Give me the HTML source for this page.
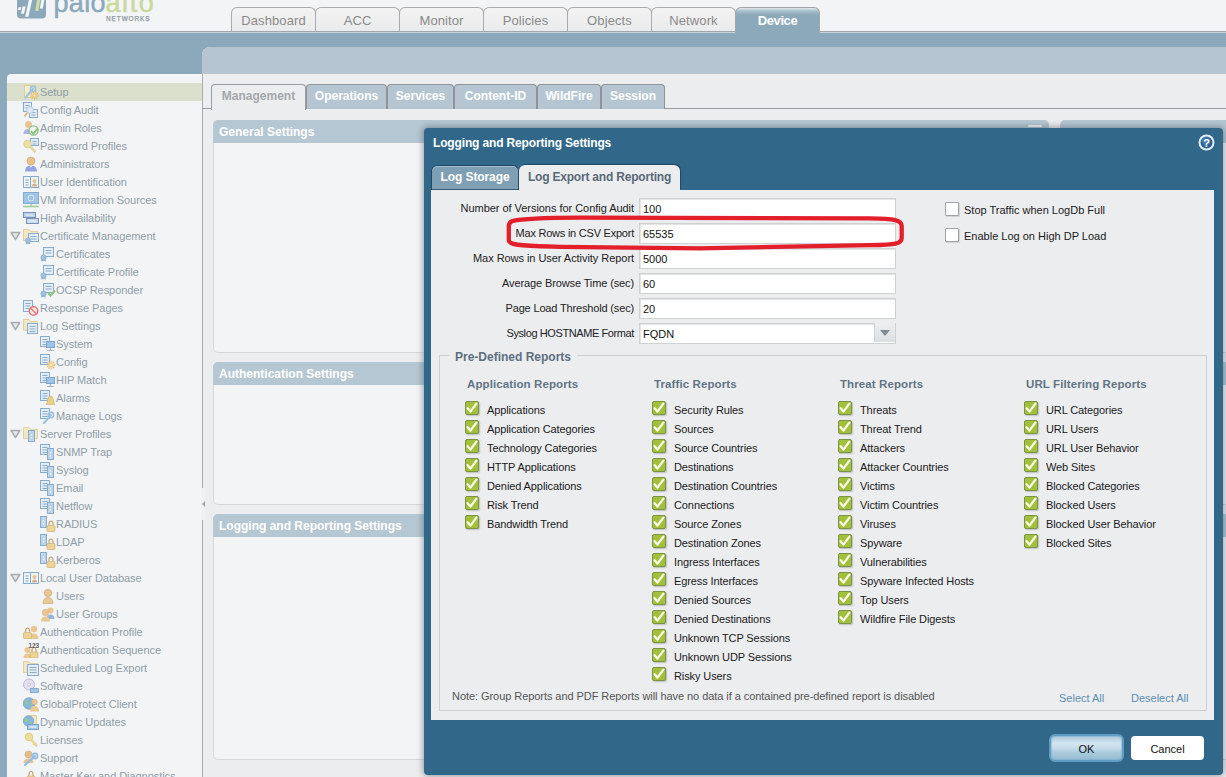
<!DOCTYPE html>
<html><head><meta charset="utf-8"><style>
*{box-sizing:border-box;margin:0;padding:0}
html,body{width:1226px;height:777px;overflow:hidden;background:#f3f4f6;font-family:"Liberation Sans",sans-serif;position:relative}
.a{position:absolute}
.tt{position:absolute;top:7px;height:25px;width:85px;border:1px solid #a9abad;border-bottom:none;border-radius:6px 6px 0 0;background:linear-gradient(#f3f3f3,#e9eaeb);color:#8a8a8a;font-size:13px;text-align:center;line-height:26px;letter-spacing:0.1px}
.band{left:0;top:31px;width:1226px;height:746px;background:#8ca9bc;border-top:1px solid #a2a6aa}
.band:after{content:"";position:absolute;left:0;top:0;width:100%;height:1px;background:#c3d3de}
.side{left:7px;top:74px;width:196px;height:710px;background:#f3f4f6;border-radius:4px 0 0 0;border-right:1px solid #b3bcc4;overflow:hidden}
.si{position:absolute;left:0;height:18px;width:195px;font-size:11px;color:#8f9ea8;line-height:18px;white-space:nowrap;letter-spacing:-0.06px}
.si svg{position:absolute;top:1px;width:16px;height:16px;opacity:.72}
.si span{position:absolute;top:0}
.si svg.tri{position:absolute;top:4px;left:3px;width:11px;height:10px;opacity:1}
.main{left:202px;top:47px;width:1030px;height:740px;background:#ecedef;border-radius:8px 0 0 0;overflow:hidden}
.mtop{left:0;top:0;width:100%;height:27px;background:#b5c6d2}
.st{position:absolute;top:37px;height:25px;border:1px solid #8e9499;border-bottom:none;border-radius:4px 4px 0 0;background:#b5c6d2;color:#fff;font-size:12px;font-weight:bold;text-align:center;line-height:22px}
.pnl{position:absolute;background:#f3f4f6;border:1px solid #d6d9dc;border-radius:5px}
.ph{position:absolute;left:-1px;top:-1px;right:-1px;height:23px;background:#b5c7d3;border-radius:5px 5px 0 0;color:#fff;font-size:12px;font-weight:bold;line-height:25px;padding-left:6px}
</style></head><body>
<svg class="a" style="left:0;top:0" width="170" height="24" viewBox="0 0 170 24">
<path d="M17,-6 H46 V14.5 Q46,18.5 42,18.5 H21 Q17,18.5 17,14.5 Z" fill="#8ca9bc"/>
<path d="M18.6,7.2 L21.4,7.2 L20.6,10 L17.8,10 Z" fill="#f4f6f8"/>
<path d="M22.6,6.4 L25.6,6.4 L24,13.8 L21,13.8 Z" fill="#f4f6f8"/>
<path d="M29.4,-2 L32.6,-2 L28.4,16.8 L25.2,16.8 Z" fill="#f4f6f8"/>
<path d="M37.4,-2 L40.6,-2 L38.2,11 L35.2,11 Z" fill="#cfe0a0"/>
<path d="M41.6,-2 L44.6,-2 L42.8,8.4 L39.8,8.4 Z" fill="#f4f6f8"/>
<text x="53.5" y="12.4" font-family="Liberation Sans" font-size="27" fill="#8ca9bc" stroke="#8ca9bc" stroke-width="0.5" letter-spacing="0.3">palo</text>
<text x="105.5" y="12.4" font-family="Liberation Sans" font-size="27" fill="#c9d89c" stroke="#c9d89c" stroke-width="0.5" letter-spacing="1.6">alto</text>
<text x="106" y="20.8" font-family="Liberation Sans" font-size="6.4" fill="#8f9aa3" stroke="#8f9aa3" stroke-width="0.25" letter-spacing="0.95">NETWORKS</text>
</svg>
<div class="tt" style="left:231px">Dashboard</div>
<div class="tt" style="left:315px">ACC</div>
<div class="tt" style="left:399px">Monitor</div>
<div class="tt" style="left:483px">Policies</div>
<div class="tt" style="left:567px">Objects</div>
<div class="tt" style="left:651px">Network</div>
<div class="a band"></div>
<div class="tt" style="left:735px;width:85px;height:27px;background:linear-gradient(#e3e9ee 0,#a9bfcd 3px,#8ca9bc 7px);color:#fff;font-weight:bold;border-color:#a2a6aa;letter-spacing:-0.4px">Device</div>
<svg width="0" height="0" style="position:absolute"><defs><symbol id="i-setup" viewBox="0 0 16 16"><rect x="1.5" y="1.5" width="11" height="12" fill="#fbf4dc" stroke="#e2c77e"/><path d="M2.5,13.5 L10,5" stroke="#8ab8e0" stroke-width="2.2" stroke-linecap="round"/><circle cx="10" cy="5" r="2.6" fill="none" stroke="#8ab8e0" stroke-width="1.6"/><circle cx="11.5" cy="11.5" r="3.4" fill="none" stroke="#e0a64f" stroke-width="1.6" stroke-dasharray="1.3 1"/><circle cx="11.5" cy="11.5" r="2.5999999999999996" fill="#f2c35a"/><circle cx="11.5" cy="11.5" r="1" fill="#fff8e0"/></symbol><symbol id="i-audit" viewBox="0 0 16 16"><rect x="0.5" y="0.5" width="8" height="9" fill="#dfeaf4" stroke="#5f93bd"/><path d="M2.5,3.5 H6.5" stroke="#5f93bd" stroke-width="1"/><path d="M2.5,6.0 H6.5" stroke="#5f93bd" stroke-width="1"/><rect x="6.5" y="7.5" width="8" height="8" fill="#dfeaf4" stroke="#5f93bd"/><path d="M8.5,10.5 H12.5" stroke="#5f93bd" stroke-width="1"/><path d="M8.5,13.0 H12.5" stroke="#5f93bd" stroke-width="1"/><circle cx="7" cy="8" r="3.4" fill="#d6e6f3" stroke="#9bb7cc" stroke-width=".8"/><path d="M4.5,10.5 L1.5,14.5" stroke="#d9a060" stroke-width="1.8"/></symbol><symbol id="i-roles" viewBox="0 0 16 16"><circle cx="5.5" cy="4.5" r="3.5" fill="#e3b36e"/><path d="M0.5,14 Q0.5,9 5,9 Q9,9 9,14Z" fill="#8f9ae0"/><circle cx="10.5" cy="10.5" r="4.6" fill="#eef6ec" stroke="#69ad59" stroke-width="1.4"/><path d="M7.8,11.1 L10.3,13.6 L14.8,8.6" fill="none" stroke="#5fae4e" stroke-width="2"/></symbol><symbol id="i-pwd" viewBox="0 0 16 16"><rect x="7.5" y="0.5" width="8" height="7" fill="#dfeaf4" stroke="#5f93bd"/><path d="M9.5,3.5 H13.5" stroke="#5f93bd" stroke-width="1"/><path d="M9.5,6.0 H13.5" stroke="#5f93bd" stroke-width="1"/><circle cx="4.5" cy="6" r="3.8" fill="#ead98a" stroke="#cdb560" stroke-width=".7"/><path d="M6.5,8 L12.5,14" stroke="#e0cd78" stroke-width="2.6"/></symbol><symbol id="i-admin" viewBox="0 0 16 16"><circle cx="8" cy="5" r="4" fill="#e6ae63" stroke="#c08a40" stroke-width=".6"/><path d="M2,15.5 Q2,9.5 8,9.5 Q14,9.5 14,15.5Z" fill="#6f86d8"/><path d="M6.5,9.8 L8,11.5 L9.5,9.8" fill="#fff"/></symbol><symbol id="i-uid" viewBox="0 0 16 16"><rect x="0.5" y="2.5" width="15" height="11" fill="#eef3f8" stroke="#5f93bd"/><path d="M7.5,2.5 V13.5 M2.5,6 H5.5 M2.5,8.5 H5.5 M2.5,11 H5.5" stroke="#5f93bd"/><circle cx="11.5" cy="7" r="2" fill="#e3b06a"/><path d="M9,12.5 Q9,9.5 11.5,9.5 Q14,9.5 14,12.5Z" fill="#c99a5a"/></symbol><symbol id="i-vm" viewBox="0 0 16 16"><rect x="0.5" y="0.5" width="15" height="11" fill="#7fb2de" stroke="#5a90c2"/><circle cx="8" cy="6" r="3" fill="none" stroke="#cfe3f4" stroke-width="1"/><path d="M0,14.5 H16" stroke="#7cc36c" stroke-width="1.6"/><path d="M8,12 V14" stroke="#8899aa"/></symbol><symbol id="i-ha" viewBox="0 0 16 16"><rect x="0.5" y="2.5" width="12" height="5" fill="#a6c2e4" stroke="#4f6f9f"/><rect x="3.5" y="8.5" width="12" height="5" fill="#bcd3ee" stroke="#4f6f9f"/><path d="M3,5 H10 M6,11 H13" stroke="#e8f0f8"/></symbol><symbol id="i-fcert" viewBox="0 0 16 16"><path d="M.5,1.5 V12.5 H14.5 V3.5 H7.5 L6,1.5 Z" fill="#efe3b4" stroke="#ddc37a"/><rect x="5.5" y="5.5" width="10" height="8" fill="#dfeaf4" stroke="#5f93bd"/><path d="M7.5,8.5 H13.5" stroke="#5f93bd" stroke-width="1"/><path d="M7.5,11.0 H13.5" stroke="#5f93bd" stroke-width="1"/><path d="M3.2,13.5 L2.6,16.7 L5,15.5 L7.4,16.7 L6.8,13.5" fill="#5f93bd"/><circle cx="5" cy="12.5" r="2.6" fill="#7fb0d6" stroke="#5f93bd" stroke-width=".8"/></symbol><symbol id="i-cert" viewBox="0 0 16 16"><rect x="3.5" y="1.5" width="10" height="9" fill="#dfeaf4" stroke="#5f93bd"/><path d="M5.5,4.5 H11.5" stroke="#5f93bd" stroke-width="1"/><path d="M5.5,7.0 H11.5" stroke="#5f93bd" stroke-width="1"/><path d="M1.7,12.5 L1.1,15.7 L3.5,14.5 L5.9,15.7 L5.3,12.5" fill="#5f93bd"/><circle cx="3.5" cy="11.5" r="2.6" fill="#7fb0d6" stroke="#5f93bd" stroke-width=".8"/></symbol><symbol id="i-ocsp" viewBox="0 0 16 16"><rect x="3.5" y="1.5" width="10" height="9" fill="#dfeaf4" stroke="#5f93bd"/><path d="M5.5,4.5 H11.5" stroke="#5f93bd" stroke-width="1"/><path d="M5.5,7.0 H11.5" stroke="#5f93bd" stroke-width="1"/><path d="M1.7,12.5 L1.1,15.7 L3.5,14.5 L5.9,15.7 L5.3,12.5" fill="#5f93bd"/><circle cx="3.5" cy="11.5" r="2.6" fill="#7fb0d6" stroke="#5f93bd" stroke-width=".8"/><path d="M8,11.0 L10.5,13.5 L15,8.5" fill="none" stroke="#5fb04f" stroke-width="2"/></symbol><symbol id="i-resp" viewBox="0 0 16 16"><rect x="0.5" y="0.5" width="9" height="11" fill="#dfeaf4" stroke="#5f93bd"/><path d="M2.5,3.5 H7.5" stroke="#5f93bd" stroke-width="1"/><path d="M2.5,6.0 H7.5" stroke="#5f93bd" stroke-width="1"/><path d="M2.5,8.5 H7.5" stroke="#5f93bd" stroke-width="1"/><circle cx="10.5" cy="11" r="4.2" fill="#fbe9e9" stroke="#e04a4a" stroke-width="1.6"/><path d="M7.7,8.2 L13.3,13.8" stroke="#e04a4a" stroke-width="1.6"/></symbol><symbol id="i-flog" viewBox="0 0 16 16"><path d="M.5,1.5 V12.5 H14.5 V3.5 H7.5 L6,1.5 Z" fill="#efe3b4" stroke="#ddc37a"/><rect x="4.5" y="5.5" width="10" height="10" fill="#dfeaf4" stroke="#5f93bd"/><path d="M6.5,8.5 H12.5" stroke="#5f93bd" stroke-width="1"/><path d="M6.5,11.0 H12.5" stroke="#5f93bd" stroke-width="1"/><path d="M6.5,13.5 H12.5" stroke="#5f93bd" stroke-width="1"/></symbol><symbol id="i-lsys" viewBox="0 0 16 16"><rect x="0.5" y="0.5" width="9" height="10" fill="#dfeaf4" stroke="#5f93bd"/><path d="M2.5,3.5 H7.5" stroke="#5f93bd" stroke-width="1"/><path d="M2.5,6.0 H7.5" stroke="#5f93bd" stroke-width="1"/><path d="M2.5,8.5 H7.5" stroke="#5f93bd" stroke-width="1"/><rect x="6.5" y="5.5" width="8" height="6" fill="#7eb4e2" stroke="#4f86bf"/><path d="M10.5,12 v2 M7,14.5 h7" stroke="#8a9aa8" stroke-width="1.2"/></symbol><symbol id="i-lcfg" viewBox="0 0 16 16"><rect x="0.5" y="0.5" width="9" height="10" fill="#dfeaf4" stroke="#5f93bd"/><path d="M2.5,3.5 H7.5" stroke="#5f93bd" stroke-width="1"/><path d="M2.5,6.0 H7.5" stroke="#5f93bd" stroke-width="1"/><path d="M2.5,8.5 H7.5" stroke="#5f93bd" stroke-width="1"/><circle cx="11" cy="11" r="3.6" fill="none" stroke="#e0a64f" stroke-width="1.6" stroke-dasharray="1.3 1"/><circle cx="11" cy="11" r="2.8" fill="#f2c35a"/><circle cx="11" cy="11" r="1" fill="#fff8e0"/></symbol><symbol id="i-lhip" viewBox="0 0 16 16"><rect x="0.5" y="0.5" width="9" height="10" fill="#dfeaf4" stroke="#5f93bd"/><path d="M2.5,3.5 H7.5" stroke="#5f93bd" stroke-width="1"/><path d="M2.5,6.0 H7.5" stroke="#5f93bd" stroke-width="1"/><path d="M2.5,8.5 H7.5" stroke="#5f93bd" stroke-width="1"/><rect x="6.5" y="5.5" width="8" height="6" fill="#7eb4e2" stroke="#4f86bf"/><path d="M10.5,12 v2 M7,14.5 h7" stroke="#8a9aa8" stroke-width="1.2"/></symbol><symbol id="i-lalarm" viewBox="0 0 16 16"><rect x="0.5" y="0.5" width="9" height="10" fill="#dfeaf4" stroke="#5f93bd"/><path d="M2.5,3.5 H7.5" stroke="#5f93bd" stroke-width="1"/><path d="M2.5,6.0 H7.5" stroke="#5f93bd" stroke-width="1"/><path d="M2.5,8.5 H7.5" stroke="#5f93bd" stroke-width="1"/><path d="M6,14.5 Q7.5,13 7.8,9 Q8.2,6 10.5,6 Q12.8,6 13.2,9 Q13.5,13 15,14.5Z" fill="#e7c25a" stroke="#c49a38" stroke-width=".6"/></symbol><symbol id="i-lmanage" viewBox="0 0 16 16"><rect x="0.5" y="0.5" width="9" height="10" fill="#dfeaf4" stroke="#5f93bd"/><path d="M2.5,3.5 H7.5" stroke="#5f93bd" stroke-width="1"/><path d="M2.5,6.0 H7.5" stroke="#5f93bd" stroke-width="1"/><path d="M2.5,8.5 H7.5" stroke="#5f93bd" stroke-width="1"/><path d="M4,15 L11,7" stroke="#7fb0da" stroke-width="2.2" stroke-linecap="round"/><circle cx="11" cy="7" r="2.6" fill="none" stroke="#7fb0da" stroke-width="1.6"/></symbol><symbol id="i-fsrv" viewBox="0 0 16 16"><path d="M.5,1.5 V12.5 H14.5 V3.5 H7.5 L6,1.5 Z" fill="#efe3b4" stroke="#ddc37a"/><rect x="5.5" y="4.5" width="6" height="11" fill="#a9c9e6" stroke="#5f93bd"/><path d="M8.5,8 v1.5 M8.5,11 v1.5" stroke="#fff" stroke-width="1.2"/></symbol><symbol id="i-srv" viewBox="0 0 16 16"><rect x="0.5" y="0.5" width="9" height="10" fill="#dfeaf4" stroke="#5f93bd"/><path d="M2.5,3.5 H7.5" stroke="#5f93bd" stroke-width="1"/><path d="M2.5,6.0 H7.5" stroke="#5f93bd" stroke-width="1"/><path d="M2.5,8.5 H7.5" stroke="#5f93bd" stroke-width="1"/><rect x="7.5" y="4.5" width="6" height="11" fill="#a9c9e6" stroke="#5f93bd"/><path d="M10.5,8 v1.5 M10.5,11 v1.5" stroke="#fff" stroke-width="1.2"/></symbol><symbol id="i-slock" viewBox="0 0 16 16"><rect x="0.5" y="0.5" width="6" height="11" fill="#a9c9e6" stroke="#5f93bd"/><path d="M3.5,4 v1.5 M3.5,7 v1.5" stroke="#fff" stroke-width="1.2"/><path d="M9,9.5 V8.0 Q9,5.0 11,5.0 Q13,5.0 13,8.0 V9.5" fill="none" stroke="#b08a40" stroke-width="1.2"/><rect x="7" y="9.5" width="8" height="6" rx="1" fill="#ecc870" stroke="#c09a48" stroke-width=".7"/></symbol><symbol id="i-user" viewBox="0 0 16 16"><circle cx="8" cy="5" r="3.8" fill="#e9b46c" stroke="#b98a48" stroke-width=".6"/><path d="M3,15.5 Q3,9.5 8,9.5 Q13,9.5 13,15.5Z" fill="#eab86e" stroke="#b98a48" stroke-width=".6"/></symbol><symbol id="i-ugrp" viewBox="0 0 16 16"><circle cx="10.5" cy="4.5" r="3" fill="#e9b46c"/><path d="M6.5,13 Q6.5,8.5 10.5,8.5 Q14.5,8.5 14.5,13Z" fill="#6e9fd8"/><circle cx="5.5" cy="6.5" r="3.2" fill="#e9b46c" stroke="#b98a48" stroke-width=".5"/><path d="M1,15.5 Q1,10.5 5.5,10.5 Q10,10.5 10,15.5Z" fill="#eab86e"/></symbol><symbol id="i-authp" viewBox="0 0 16 16"><circle cx="11" cy="5" r="3.2" fill="#e9b46c"/><path d="M6.5,15 Q6.5,9.5 11,9.5 Q15.5,9.5 15.5,15Z" fill="#eab86e"/><path d="M2.5,8.5 V7.0 Q2.5,4.0 4.5,4.0 Q6.5,4.0 6.5,7.0 V8.5" fill="none" stroke="#b08a40" stroke-width="1.2"/><rect x="0.5" y="8.5" width="8" height="6" rx="1" fill="#ecc870" stroke="#c09a48" stroke-width=".7"/></symbol><symbol id="i-auths" viewBox="0 0 16 16"><circle cx="4.5" cy="8" r="3" fill="#e9b46c"/><path d="M0.5,16 Q0.5,11.5 4.5,11.5 Q8.5,11.5 8.5,16Z" fill="#eab86e"/><path d="M9,10 V8.5 Q9,5.5 11,5.5 Q13,5.5 13,8.5 V10" fill="none" stroke="#b08a40" stroke-width="1.2"/><rect x="7" y="10" width="8" height="6" rx="1" fill="#ecc870" stroke="#c09a48" stroke-width=".7"/><text x="5.5" y="5.5" font-family="Liberation Sans" font-size="6.5" font-weight="bold" fill="#222">123</text></symbol><symbol id="i-sched" viewBox="0 0 16 16"><path d="M.5,1.5 V12.5 H14.5 V3.5 H7.5 L6,1.5 Z" fill="#efe3b4" stroke="#ddc37a"/><rect x="4.5" y="4.5" width="11" height="11" fill="#dfeaf4" stroke="#5f93bd"/><path d="M6.5,7.5 H13.5" stroke="#5f93bd" stroke-width="1"/><path d="M6.5,10.0 H13.5" stroke="#5f93bd" stroke-width="1"/><path d="M6.5,12.5 H13.5" stroke="#5f93bd" stroke-width="1"/></symbol><symbol id="i-soft" viewBox="0 0 16 16"><circle cx="6" cy="6.5" r="5.5" fill="#ddd6ee" stroke="#a796c6" stroke-width=".8"/><circle cx="6" cy="6.5" r="1.5" fill="#fff" stroke="#a796c6" stroke-width=".6"/><rect x="7.5" y="10.5" width="8" height="4" fill="#7fb0d8" stroke="#4f86bf" stroke-width=".8"/></symbol><symbol id="i-gp" viewBox="0 0 16 16"><circle cx="6" cy="7.5" r="5.8" fill="#5f9fd6" stroke="#3f7bb0" stroke-width=".7"/><path d="M3,4.0 Q6,5.5 5,8.5 Q3,9.5 2,7.5Z M7,8.5 Q10,7.5 9,11.5 Z" fill="#6fbf5a"/><circle cx="11.5" cy="6" r="2.8" fill="#eab46a" stroke="#b98a48" stroke-width=".5"/><path d="M7,15.5 Q7,10 11.5,10 Q16,10 16,15.5Z" fill="#eab86e"/></symbol><symbol id="i-dyn" viewBox="0 0 16 16"><path d="M4.5,1.5 H13.5 V10 H4.5Z" fill="#efe3b4" stroke="#ddc37a"/><circle cx="5.5" cy="7" r="5.2" fill="#5f9fd6" stroke="#3f7bb0" stroke-width=".7"/><path d="M2.5,3.5 Q5.5,5 4.5,8 Q2.5,9 1.5,7Z M6.5,8 Q9.5,7 8.5,11 Z" fill="#6fbf5a"/><rect x="4.5" y="10.5" width="11" height="5" fill="#8abde4" stroke="#4f86bf"/><path d="M6.5,13 H13.5" stroke="#fff"/></symbol><symbol id="i-lic" viewBox="0 0 16 16"><circle cx="6" cy="5" r="3.8" fill="#ecd577" stroke="#cfb04c" stroke-width=".8"/><path d="M8,7.5 L14,14" stroke="#e6cd6a" stroke-width="2.6"/><path d="M11.5,11.5 L10,13" stroke="#e6cd6a" stroke-width="1.6"/></symbol><symbol id="i-support" viewBox="0 0 16 16"><circle cx="5.5" cy="4.5" r="3.6" fill="#e0a860" stroke="#b98a48" stroke-width=".5"/><path d="M0.5,13 Q0.5,8.5 5.5,8.5 Q10.5,8.5 10.5,13Z" fill="#e8b26a"/><path d="M2,15 L12,6" stroke="#6ea7dc" stroke-width="2.2" stroke-linecap="round"/><circle cx="12" cy="6" r="2.6" fill="none" stroke="#6ea7dc" stroke-width="1.6"/></symbol><symbol id="i-mkey" viewBox="0 0 16 16"><path d="M6,8 V6.5 Q6,3.5 8,3.5 Q10,3.5 10,6.5 V8" fill="none" stroke="#b08a40" stroke-width="1.2"/><rect x="4" y="8" width="8" height="6" rx="1" fill="#ecc870" stroke="#c09a48" stroke-width=".7"/></symbol></defs></svg>
<div class="a side">
<div class="a" style="left:0;top:9px;width:196px;height:18px;background:#dae0cb"></div>
<div class="si" style="top:9px"><svg style="left:16px"><use href="#i-setup"/></svg><span style="left:33px">Setup</span></div>
<div class="si" style="top:27px"><svg style="left:16px"><use href="#i-audit"/></svg><span style="left:33px">Config Audit</span></div>
<div class="si" style="top:45px"><svg style="left:16px"><use href="#i-roles"/></svg><span style="left:33px">Admin Roles</span></div>
<div class="si" style="top:63px"><svg style="left:16px"><use href="#i-pwd"/></svg><span style="left:33px">Password Profiles</span></div>
<div class="si" style="top:81px"><svg style="left:16px"><use href="#i-admin"/></svg><span style="left:33px">Administrators</span></div>
<div class="si" style="top:99px"><svg style="left:16px"><use href="#i-uid"/></svg><span style="left:33px">User Identification</span></div>
<div class="si" style="top:117px"><svg style="left:16px"><use href="#i-vm"/></svg><span style="left:33px">VM Information Sources</span></div>
<div class="si" style="top:135px"><svg style="left:16px"><use href="#i-ha"/></svg><span style="left:33px">High Availability</span></div>
<div class="si" style="top:153px"><svg class="tri" viewBox="0 0 11 10" style="opacity:1"><path d="M1.2,1.5 L9.8,1.5 L5.5,8.6 Z" fill="#e4e6e8" stroke="#a9acaf" stroke-width="1.5" stroke-linejoin="round"/></svg><svg style="left:16px"><use href="#i-fcert"/></svg><span style="left:33px">Certificate Management</span></div>
<div class="si" style="top:171px"><svg style="left:33px"><use href="#i-cert"/></svg><span style="left:49px">Certificates</span></div>
<div class="si" style="top:189px"><svg style="left:33px"><use href="#i-cert"/></svg><span style="left:49px">Certificate Profile</span></div>
<div class="si" style="top:207px"><svg style="left:33px"><use href="#i-ocsp"/></svg><span style="left:49px">OCSP Responder</span></div>
<div class="si" style="top:225px"><svg style="left:16px"><use href="#i-resp"/></svg><span style="left:33px">Response Pages</span></div>
<div class="si" style="top:243px"><svg class="tri" viewBox="0 0 11 10" style="opacity:1"><path d="M1.2,1.5 L9.8,1.5 L5.5,8.6 Z" fill="#e4e6e8" stroke="#a9acaf" stroke-width="1.5" stroke-linejoin="round"/></svg><svg style="left:16px"><use href="#i-flog"/></svg><span style="left:33px">Log Settings</span></div>
<div class="si" style="top:261px"><svg style="left:33px"><use href="#i-lsys"/></svg><span style="left:49px">System</span></div>
<div class="si" style="top:279px"><svg style="left:33px"><use href="#i-lcfg"/></svg><span style="left:49px">Config</span></div>
<div class="si" style="top:297px"><svg style="left:33px"><use href="#i-lhip"/></svg><span style="left:49px">HIP Match</span></div>
<div class="si" style="top:315px"><svg style="left:33px"><use href="#i-lalarm"/></svg><span style="left:49px">Alarms</span></div>
<div class="si" style="top:333px"><svg style="left:33px"><use href="#i-lmanage"/></svg><span style="left:49px">Manage Logs</span></div>
<div class="si" style="top:351px"><svg class="tri" viewBox="0 0 11 10" style="opacity:1"><path d="M1.2,1.5 L9.8,1.5 L5.5,8.6 Z" fill="#e4e6e8" stroke="#a9acaf" stroke-width="1.5" stroke-linejoin="round"/></svg><svg style="left:16px"><use href="#i-fsrv"/></svg><span style="left:33px">Server Profiles</span></div>
<div class="si" style="top:369px"><svg style="left:33px"><use href="#i-srv"/></svg><span style="left:49px">SNMP Trap</span></div>
<div class="si" style="top:387px"><svg style="left:33px"><use href="#i-srv"/></svg><span style="left:49px">Syslog</span></div>
<div class="si" style="top:405px"><svg style="left:33px"><use href="#i-srv"/></svg><span style="left:49px">Email</span></div>
<div class="si" style="top:423px"><svg style="left:33px"><use href="#i-srv"/></svg><span style="left:49px">Netflow</span></div>
<div class="si" style="top:441px"><svg style="left:33px"><use href="#i-slock"/></svg><span style="left:49px">RADIUS</span></div>
<div class="si" style="top:459px"><svg style="left:33px"><use href="#i-slock"/></svg><span style="left:49px">LDAP</span></div>
<div class="si" style="top:477px"><svg style="left:33px"><use href="#i-slock"/></svg><span style="left:49px">Kerberos</span></div>
<div class="si" style="top:495px"><svg class="tri" viewBox="0 0 11 10" style="opacity:1"><path d="M1.2,1.5 L9.8,1.5 L5.5,8.6 Z" fill="#e4e6e8" stroke="#a9acaf" stroke-width="1.5" stroke-linejoin="round"/></svg><svg style="left:16px"><use href="#i-uid"/></svg><span style="left:33px">Local User Database</span></div>
<div class="si" style="top:513px"><svg style="left:33px"><use href="#i-user"/></svg><span style="left:49px">Users</span></div>
<div class="si" style="top:531px"><svg style="left:33px"><use href="#i-ugrp"/></svg><span style="left:49px">User Groups</span></div>
<div class="si" style="top:549px"><svg style="left:16px"><use href="#i-authp"/></svg><span style="left:33px">Authentication Profile</span></div>
<div class="si" style="top:567px"><svg style="left:16px"><use href="#i-auths"/></svg><span style="left:33px">Authentication Sequence</span></div>
<div class="si" style="top:585px"><svg style="left:16px"><use href="#i-sched"/></svg><span style="left:33px">Scheduled Log Export</span></div>
<div class="si" style="top:603px"><svg style="left:16px"><use href="#i-soft"/></svg><span style="left:33px">Software</span></div>
<div class="si" style="top:621px"><svg style="left:16px"><use href="#i-gp"/></svg><span style="left:33px">GlobalProtect Client</span></div>
<div class="si" style="top:639px"><svg style="left:16px"><use href="#i-dyn"/></svg><span style="left:33px">Dynamic Updates</span></div>
<div class="si" style="top:657px"><svg style="left:16px"><use href="#i-lic"/></svg><span style="left:33px">Licenses</span></div>
<div class="si" style="top:675px"><svg style="left:16px"><use href="#i-support"/></svg><span style="left:33px">Support</span></div>
<div class="si" style="top:693px"><svg style="left:16px"><use href="#i-mkey"/></svg><span style="left:33px">Master Key and Diagnostics</span></div>
</div>
<div class="a main">
<div class="a mtop"></div>
<div class="a" style="left:0;top:27px;width:1px;height:720px;background:#a6adb3"></div>
<div class="a" style="left:0;top:441px;width:3px;height:32px;background:#eef0f2"></div><i class="a" style="left:0;top:454px;border-top:3px solid transparent;border-bottom:3px solid transparent;border-right:3px solid #a0a6ab"></i>
<div class="a" style="left:0;top:61px;width:1030px;height:1px;background:#9a9ea3"></div>
<div class="st" style="left:9px;width:95px;height:26px;background:#ecedef;color:#a4a8ac;border-color:#9a9ea3">Management</div>
<div class="st" style="left:104px;width:81px">Operations</div>
<div class="st" style="left:185px;width:67px">Services</div>
<div class="st" style="left:252px;width:83px">Content-ID</div>
<div class="st" style="left:335px;width:64px">WildFire</div>
<div class="st" style="left:399px;width:64px">Session</div>
<div class="pnl" style="left:11px;top:73px;width:836px;height:233px"><div class="ph">General Settings</div></div>
<div class="pnl" style="left:11px;top:315px;width:836px;height:143px"><div class="ph">Authentication Settings</div></div>
<div class="pnl" style="left:11px;top:467px;width:836px;height:246px"><div class="ph">Logging and Reporting Settings</div></div>
<div class="pnl" style="left:858px;top:73px;width:400px;height:233px"><div class="ph"></div></div>
<div class="pnl" style="left:858px;top:315px;width:400px;height:143px"><div class="ph"></div></div>
<div class="pnl" style="left:858px;top:467px;width:400px;height:246px"><div class="ph"></div></div>
<div class="a" style="left:826px;top:78px;width:14px;height:2px;background:#f2f4f6;border-radius:1px"></div>
</div>

<style>
.dlg{left:424px;top:128px;width:799px;height:647px;background:#31688a;border-radius:4px;box-shadow:0 0 6px 1px rgba(40,50,60,.45)}
.dt{position:absolute;left:9px;top:8px;color:#fff;font-size:12px;font-weight:bold;letter-spacing:-0.15px}
.dtab{position:absolute;top:38px;height:24px;border-radius:6px 6px 0 0;font-size:12px;font-weight:bold;line-height:22px;text-align:center;letter-spacing:-0.1px}
.dc{position:absolute;left:7px;top:62px;width:783px;height:530px;background:#ecedef}
.lbl{position:absolute;right:580px;font-size:11px;letter-spacing:-0.08px;color:#222;white-space:nowrap;text-align:right}
.inp{position:absolute;left:208px;width:257px;height:21px;background:#fff;border:1px solid #cfd1d3;box-shadow:inset 1px 1px 0 #e3e4e6;font-size:11px;color:#111;padding-left:3px;line-height:20px}
.cb{position:absolute;width:14px;height:14px;border:1px solid #7b9545;border-radius:2px;background:#a2c03c;box-shadow:1px 1px 1.5px rgba(0,0,0,.2)}
.cb svg{position:absolute;left:-1px;top:-1px;width:14px;height:14px}
.cbl{position:absolute;font-size:11px;color:#1a1a1a;white-space:nowrap}
.rh{position:absolute;font-size:11.5px;font-weight:bold;color:#627584;white-space:nowrap;letter-spacing:0.1px}
</style>
<svg width="0" height="0" style="position:absolute"><defs><path id="chk" d="M2.6,7.2 L5.4,10.6 L11.4,2.6" fill="none" stroke="#fbfde6" stroke-width="2.3" stroke-linecap="round" stroke-linejoin="round"/></defs></svg>
<div class="a dlg">
<div class="dt">Logging and Reporting Settings</div>
<svg class="a" style="left:773px;top:5px" width="19" height="19" viewBox="0 0 19 19"><defs><radialGradient id="hg" cx="45%" cy="40%" r="65%"><stop offset="0" stop-color="#4f8cc0"/><stop offset="1" stop-color="#154676"/></radialGradient></defs><circle cx="9.5" cy="9.5" r="7" fill="url(#hg)" stroke="#e2f0fa" stroke-width="2"/><text x="9.6" y="13.6" font-family="Liberation Sans" font-weight="bold" font-size="11.5" fill="#fff" text-anchor="middle">?</text></svg>
<div class="dtab" style="left:7px;top:37px;width:88px;height:25px;background:#7f9fb5;color:#fff;border:1px solid #22496a;border-bottom:1px solid #3a5a72;box-shadow:inset 0 1px 0 #a6bfcf;line-height:22px">Log Storage</div>
<div class="dtab" style="left:95px;top:37px;width:161px;height:25px;background:#ecedef;color:#5a6a78;line-height:24px;letter-spacing:-0.2px;box-shadow:1px -1px 1px rgba(20,40,60,.5)">Log Export and Reporting</div>
<div class="dc">
<div class="lbl" style="top:12px;letter-spacing:-0.04px">Number of Versions for Config Audit</div><div class="inp" style="top:8px">100</div>
<div class="lbl" style="top:37px;letter-spacing:-0.23px">Max Rows in CSV Export</div><div class="inp" style="top:33px">65535</div>
<div class="lbl" style="top:62px;letter-spacing:-0.05px">Max Rows in User Activity Report</div><div class="inp" style="top:58px">5000</div>
<div class="lbl" style="top:87px;letter-spacing:-0.12px">Average Browse Time (sec)</div><div class="inp" style="top:83px">60</div>
<div class="lbl" style="top:112px;letter-spacing:-0.16px">Page Load Threshold (sec)</div><div class="inp" style="top:108px">20</div>
<div class="lbl" style="top:137px;letter-spacing:-0.4px">Syslog HOSTNAME Format</div><div class="inp" style="top:133px">FQDN</div>
<div class="a" style="left:443px;top:133px;width:21px;height:19px;background:linear-gradient(#eceef0,#dcdfe2);border-left:1px solid #cfd1d3"><i style="position:absolute;left:5px;top:7px;border-left:5.5px solid transparent;border-right:5.5px solid transparent;border-top:6px solid #7f8b95"></i></div>
<div class="a" style="left:514px;top:12px;width:14px;height:14px;background:#fff;border:1px solid #9ea3a8;border-radius:1px;box-shadow:1px 1px 1px rgba(0,0,0,.12)"></div><div class="cbl" style="left:533px;top:14px">Stop Traffic when LogDb Full</div>
<div class="a" style="left:514px;top:38px;width:14px;height:14px;background:#fff;border:1px solid #9ea3a8;border-radius:1px;box-shadow:1px 1px 1px rgba(0,0,0,.12)"></div><div class="cbl" style="left:533px;top:40px">Enable Log on High DP Load</div>
<div class="a" style="left:8px;top:165px;width:768px;height:356px;border:1px solid #cdd0d3"></div>
<div class="a" style="left:18px;top:160px;padding:0 6px;background:#ecedef;font-size:12px;font-weight:bold;color:#5d7080;white-space:nowrap">Pre-Defined Reports</div>
<div class="rh" style="left:36px;top:188px">Application Reports</div>
<div class="cb" style="left:34px;top:211px"><svg viewBox="0 0 14 14"><use href="#chk"/></svg></div><div class="cbl" style="left:56px;top:214px;letter-spacing:-0.1px">Applications</div>
<div class="cb" style="left:34px;top:230px"><svg viewBox="0 0 14 14"><use href="#chk"/></svg></div><div class="cbl" style="left:56px;top:233px;letter-spacing:-0.1px">Application Categories</div>
<div class="cb" style="left:34px;top:249px"><svg viewBox="0 0 14 14"><use href="#chk"/></svg></div><div class="cbl" style="left:56px;top:252px;letter-spacing:-0.1px">Technology Categories</div>
<div class="cb" style="left:34px;top:268px"><svg viewBox="0 0 14 14"><use href="#chk"/></svg></div><div class="cbl" style="left:56px;top:271px;letter-spacing:-0.1px">HTTP Applications</div>
<div class="cb" style="left:34px;top:287px"><svg viewBox="0 0 14 14"><use href="#chk"/></svg></div><div class="cbl" style="left:56px;top:290px;letter-spacing:-0.1px">Denied Applications</div>
<div class="cb" style="left:34px;top:306px"><svg viewBox="0 0 14 14"><use href="#chk"/></svg></div><div class="cbl" style="left:56px;top:309px;letter-spacing:-0.1px">Risk Trend</div>
<div class="cb" style="left:34px;top:325px"><svg viewBox="0 0 14 14"><use href="#chk"/></svg></div><div class="cbl" style="left:56px;top:328px;letter-spacing:-0.1px">Bandwidth Trend</div>
<div class="rh" style="left:223px;top:188px">Traffic Reports</div>
<div class="cb" style="left:221px;top:211px"><svg viewBox="0 0 14 14"><use href="#chk"/></svg></div><div class="cbl" style="left:243px;top:214px;letter-spacing:-0.1px">Security Rules</div>
<div class="cb" style="left:221px;top:230px"><svg viewBox="0 0 14 14"><use href="#chk"/></svg></div><div class="cbl" style="left:243px;top:233px;letter-spacing:-0.1px">Sources</div>
<div class="cb" style="left:221px;top:249px"><svg viewBox="0 0 14 14"><use href="#chk"/></svg></div><div class="cbl" style="left:243px;top:252px;letter-spacing:-0.1px">Source Countries</div>
<div class="cb" style="left:221px;top:268px"><svg viewBox="0 0 14 14"><use href="#chk"/></svg></div><div class="cbl" style="left:243px;top:271px;letter-spacing:-0.1px">Destinations</div>
<div class="cb" style="left:221px;top:287px"><svg viewBox="0 0 14 14"><use href="#chk"/></svg></div><div class="cbl" style="left:243px;top:290px;letter-spacing:-0.1px">Destination Countries</div>
<div class="cb" style="left:221px;top:306px"><svg viewBox="0 0 14 14"><use href="#chk"/></svg></div><div class="cbl" style="left:243px;top:309px;letter-spacing:-0.1px">Connections</div>
<div class="cb" style="left:221px;top:325px"><svg viewBox="0 0 14 14"><use href="#chk"/></svg></div><div class="cbl" style="left:243px;top:328px;letter-spacing:-0.1px">Source Zones</div>
<div class="cb" style="left:221px;top:344px"><svg viewBox="0 0 14 14"><use href="#chk"/></svg></div><div class="cbl" style="left:243px;top:347px;letter-spacing:-0.1px">Destination Zones</div>
<div class="cb" style="left:221px;top:363px"><svg viewBox="0 0 14 14"><use href="#chk"/></svg></div><div class="cbl" style="left:243px;top:366px;letter-spacing:-0.1px">Ingress Interfaces</div>
<div class="cb" style="left:221px;top:382px"><svg viewBox="0 0 14 14"><use href="#chk"/></svg></div><div class="cbl" style="left:243px;top:385px;letter-spacing:-0.1px">Egress Interfaces</div>
<div class="cb" style="left:221px;top:401px"><svg viewBox="0 0 14 14"><use href="#chk"/></svg></div><div class="cbl" style="left:243px;top:404px;letter-spacing:-0.1px">Denied Sources</div>
<div class="cb" style="left:221px;top:420px"><svg viewBox="0 0 14 14"><use href="#chk"/></svg></div><div class="cbl" style="left:243px;top:423px;letter-spacing:-0.1px">Denied Destinations</div>
<div class="cb" style="left:221px;top:439px"><svg viewBox="0 0 14 14"><use href="#chk"/></svg></div><div class="cbl" style="left:243px;top:442px;letter-spacing:-0.1px">Unknown TCP Sessions</div>
<div class="cb" style="left:221px;top:458px"><svg viewBox="0 0 14 14"><use href="#chk"/></svg></div><div class="cbl" style="left:243px;top:461px;letter-spacing:-0.1px">Unknown UDP Sessions</div>
<div class="cb" style="left:221px;top:477px"><svg viewBox="0 0 14 14"><use href="#chk"/></svg></div><div class="cbl" style="left:243px;top:480px;letter-spacing:-0.1px">Risky Users</div>
<div class="rh" style="left:409px;top:188px">Threat Reports</div>
<div class="cb" style="left:407px;top:211px"><svg viewBox="0 0 14 14"><use href="#chk"/></svg></div><div class="cbl" style="left:429px;top:214px;letter-spacing:-0.1px">Threats</div>
<div class="cb" style="left:407px;top:230px"><svg viewBox="0 0 14 14"><use href="#chk"/></svg></div><div class="cbl" style="left:429px;top:233px;letter-spacing:-0.1px">Threat Trend</div>
<div class="cb" style="left:407px;top:249px"><svg viewBox="0 0 14 14"><use href="#chk"/></svg></div><div class="cbl" style="left:429px;top:252px;letter-spacing:-0.1px">Attackers</div>
<div class="cb" style="left:407px;top:268px"><svg viewBox="0 0 14 14"><use href="#chk"/></svg></div><div class="cbl" style="left:429px;top:271px;letter-spacing:-0.1px">Attacker Countries</div>
<div class="cb" style="left:407px;top:287px"><svg viewBox="0 0 14 14"><use href="#chk"/></svg></div><div class="cbl" style="left:429px;top:290px;letter-spacing:-0.1px">Victims</div>
<div class="cb" style="left:407px;top:306px"><svg viewBox="0 0 14 14"><use href="#chk"/></svg></div><div class="cbl" style="left:429px;top:309px;letter-spacing:-0.1px">Victim Countries</div>
<div class="cb" style="left:407px;top:325px"><svg viewBox="0 0 14 14"><use href="#chk"/></svg></div><div class="cbl" style="left:429px;top:328px;letter-spacing:-0.1px">Viruses</div>
<div class="cb" style="left:407px;top:344px"><svg viewBox="0 0 14 14"><use href="#chk"/></svg></div><div class="cbl" style="left:429px;top:347px;letter-spacing:-0.1px">Spyware</div>
<div class="cb" style="left:407px;top:363px"><svg viewBox="0 0 14 14"><use href="#chk"/></svg></div><div class="cbl" style="left:429px;top:366px;letter-spacing:-0.1px">Vulnerabilities</div>
<div class="cb" style="left:407px;top:382px"><svg viewBox="0 0 14 14"><use href="#chk"/></svg></div><div class="cbl" style="left:429px;top:385px;letter-spacing:-0.1px">Spyware Infected Hosts</div>
<div class="cb" style="left:407px;top:401px"><svg viewBox="0 0 14 14"><use href="#chk"/></svg></div><div class="cbl" style="left:429px;top:404px;letter-spacing:-0.1px">Top Users</div>
<div class="cb" style="left:407px;top:420px"><svg viewBox="0 0 14 14"><use href="#chk"/></svg></div><div class="cbl" style="left:429px;top:423px;letter-spacing:-0.1px">Wildfire File Digests</div>
<div class="rh" style="left:595px;top:188px">URL Filtering Reports</div>
<div class="cb" style="left:593px;top:211px"><svg viewBox="0 0 14 14"><use href="#chk"/></svg></div><div class="cbl" style="left:615px;top:214px;letter-spacing:-0.1px">URL Categories</div>
<div class="cb" style="left:593px;top:230px"><svg viewBox="0 0 14 14"><use href="#chk"/></svg></div><div class="cbl" style="left:615px;top:233px;letter-spacing:-0.1px">URL Users</div>
<div class="cb" style="left:593px;top:249px"><svg viewBox="0 0 14 14"><use href="#chk"/></svg></div><div class="cbl" style="left:615px;top:252px;letter-spacing:-0.1px">URL User Behavior</div>
<div class="cb" style="left:593px;top:268px"><svg viewBox="0 0 14 14"><use href="#chk"/></svg></div><div class="cbl" style="left:615px;top:271px;letter-spacing:-0.1px">Web Sites</div>
<div class="cb" style="left:593px;top:287px"><svg viewBox="0 0 14 14"><use href="#chk"/></svg></div><div class="cbl" style="left:615px;top:290px;letter-spacing:-0.1px">Blocked Categories</div>
<div class="cb" style="left:593px;top:306px"><svg viewBox="0 0 14 14"><use href="#chk"/></svg></div><div class="cbl" style="left:615px;top:309px;letter-spacing:-0.1px">Blocked Users</div>
<div class="cb" style="left:593px;top:325px"><svg viewBox="0 0 14 14"><use href="#chk"/></svg></div><div class="cbl" style="left:615px;top:328px;letter-spacing:-0.1px">Blocked User Behavior</div>
<div class="cb" style="left:593px;top:344px"><svg viewBox="0 0 14 14"><use href="#chk"/></svg></div><div class="cbl" style="left:615px;top:347px;letter-spacing:-0.1px">Blocked Sites</div>
<div class="a" style="left:21px;top:500px;font-size:11px;color:#555;white-space:nowrap;letter-spacing:-0.06px">Note: Group Reports and PDF Reports will have no data if a contained pre-defined report is disabled</div>
<div class="a" style="left:628px;top:502px;font-size:11px;color:#5c8db3;white-space:nowrap">Select All</div>
<div class="a" style="left:700px;top:502px;font-size:11px;color:#5c8db3;white-space:nowrap">Deselect All</div>
</div>
<div class="a" style="left:625px;top:606px;width:75px;height:28px;border:2px solid #609dc3;border-radius:6px;background:linear-gradient(#a9c9dd 0%,#d2e3ee 30%,#c9ddea 48%,#a9cadd 70%,#96bcd3 100%);box-shadow:inset 0 0 1px 1px rgba(120,170,200,.5);font-size:11px;color:#111;text-align:center;line-height:26px">OK</div>
<div class="a" style="left:707px;top:608px;width:73px;height:24px;border-radius:4px;background:#fff;font-size:11px;color:#111;text-align:center;line-height:26px">Cancel</div>
</div>
<svg class="a" style="left:0;top:0" width="1226" height="777"><path d="M513,220.8 C522,218.6 545,217.8 580,217.6 L870,218.4 C895,218.8 901.6,220 901.7,226 L901.7,238 C901.6,243.8 896,244.6 870,245.2 L700,248.3 L560,246.8 C522,246.2 509.2,245.2 508.8,240.5 L508.8,226.5 C508.9,222.8 510.2,221.4 513,220.8 Z" fill="none" stroke="#e21f2a" stroke-width="4.3" stroke-linejoin="round"/></svg>
</body></html>
